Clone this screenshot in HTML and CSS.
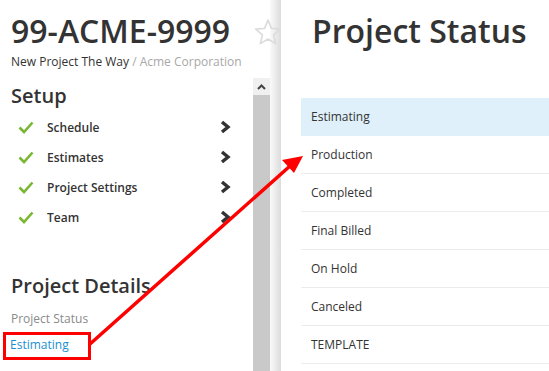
FILE: index.html
```html
<!DOCTYPE html>
<html>
<head>
<meta charset="utf-8">
<link rel="stylesheet" href="styles.css">
</head>
<body>
<div class="page">
  <div class="left">
    <div class="head">
      <h1 class="job">99-ACME-9999</h1>
      <div class="sub">New Project The Way <span class="client">/ Acme Corporation</span></div>
      <svg class="star" width="28" height="28" viewBox="0 0 26 26"><path d="M13 2 L16.2 9.6 L24.4 10.3 L18.2 15.7 L20.1 23.8 L13 19.5 L5.9 23.8 L7.8 15.7 L1.6 10.3 L9.8 9.6 Z" fill="none" stroke="#dcdcdc" stroke-width="1.6" stroke-linejoin="round"/></svg>
    </div>
    <div class="body">
      <div class="content">
        <h2 class="section">Setup</h2>
        <ul class="steps">
          <li class="step"><svg class="check" width="16" height="13" viewBox="0 0 16 13"><path d="M1.5 6.5 L6 11 L14.5 1.5" fill="none" stroke="#7ab733" stroke-width="2.6"/></svg><span class="label">Schedule</span><svg class="chev" width="12" height="14" viewBox="0 0 12 14"><path d="M3 2 L9 7 L3 12" fill="none" stroke="#333" stroke-width="3.4"/></svg></li>
          <li class="step"><svg class="check" width="16" height="13" viewBox="0 0 16 13"><path d="M1.5 6.5 L6 11 L14.5 1.5" fill="none" stroke="#7ab733" stroke-width="2.6"/></svg><span class="label">Estimates</span><svg class="chev" width="12" height="14" viewBox="0 0 12 14"><path d="M3 2 L9 7 L3 12" fill="none" stroke="#333" stroke-width="3.4"/></svg></li>
          <li class="step"><svg class="check" width="16" height="13" viewBox="0 0 16 13"><path d="M1.5 6.5 L6 11 L14.5 1.5" fill="none" stroke="#7ab733" stroke-width="2.6"/></svg><span class="label">Project Settings</span><svg class="chev" width="12" height="14" viewBox="0 0 12 14"><path d="M3 2 L9 7 L3 12" fill="none" stroke="#333" stroke-width="3.4"/></svg></li>
          <li class="step"><svg class="check" width="16" height="13" viewBox="0 0 16 13"><path d="M1.5 6.5 L6 11 L14.5 1.5" fill="none" stroke="#7ab733" stroke-width="2.6"/></svg><span class="label">Team</span><svg class="chev" width="12" height="14" viewBox="0 0 12 14"><path d="M3 2 L9 7 L3 12" fill="none" stroke="#333" stroke-width="3.4"/></svg></li>
        </ul>
        <h2 class="section details">Project Details</h2>
        <div class="field-label">Project Status</div>
        <div class="field-value"><span class="highlight">Estimating</span></div>
      </div>
      <div class="scrollbar">
        <div class="sb-up"><svg width="9" height="6" viewBox="0 0 9 6"><path d="M1 5 L4.5 1.5 L8 5" fill="none" stroke="#444" stroke-width="2"/></svg></div>
        <div class="sb-thumb"></div>
      </div>
    </div>
  </div>
  <div class="shade"></div>
  <div class="right">
    <h1 class="title">Project Status</h1>
    <ul class="statuses">
      <li class="status active">Estimating</li>
      <li class="status">Production</li>
      <li class="status">Completed</li>
      <li class="status">Final Billed</li>
      <li class="status">On Hold</li>
      <li class="status">Canceled</li>
      <li class="status">TEMPLATE</li>
    </ul>
  </div>
  <svg class="arrow" width="549" height="371" viewBox="0 0 549 371">
    <line x1="90" y1="344" x2="290" y2="166" stroke="#ff0000" stroke-width="3.5"/>
    <path d="M303 156 L282 160 L294 173 Z" fill="#ff0000"/>
  </svg>
</div>
</body>
</html>
```

FILE: styles.css
```css
* { box-sizing: border-box; }
html, body { margin: 0; padding: 0; }
body {
  font-family: "Open Sans", "Liberation Sans", sans-serif;
  color: #333;
  background: #fff;
}
.page {
  position: relative;
  width: 549px;
  height: 371px;
  overflow: hidden;
  display: flex;
}
.left {
  width: 270px;
  flex: none;
  display: flex;
  flex-direction: column;
}
.head {
  position: relative;
  height: 78px;
  padding: 9px 0 0 11px;
}
.job {
  margin: 0;
  font-size: 32px;
  font-weight: 600;
  line-height: 44px;
  color: #333;
}
.sub {
  font-size: 12px;
  line-height: 16px;
  margin-top: 1px;
  color: #333;
}
.client { color: #a8a8a8; }
.star {
  position: absolute;
  left: 254px;
  top: 18px;
}
.body {
  flex: 1;
  display: flex;
}
.content {
  width: 253px;
  padding: 5px 0 0 11px;
}
.section {
  margin: 0;
  font-size: 20px;
  font-weight: 600;
  line-height: 26px;
}
.steps {
  list-style: none;
  margin: 3px 0 0 0;
  padding: 0 0 0 7px;
}
.step {
  display: flex;
  align-items: center;
  height: 30px;
  font-size: 12px;
  font-weight: 600;
}
.check { flex: none; }
.label {
  margin-left: 13px;
  flex: 1;
}
.chev { margin-right: 22px; flex: none; }
.details { margin-top: 41px; }
.field-label {
  font-size: 12px;
  color: #8a8a8a;
  margin-top: 12px;
  line-height: 16px;
}
.field-value {
  margin-top: 5px;
  margin-left: -8px;
  font-size: 12px;
  line-height: 16px;
}
.highlight {
  display: inline-block;
  width: 88px;
  height: 28px;
  padding: 2px 0 0 4px;
  border: 3.5px solid #ff0000;
  color: #1b8fd2;
}
.scrollbar {
  width: 17px;
  display: flex;
  flex-direction: column;
}
.sb-up {
  height: 17px;
  background: #f0f0f0;
  display: flex;
  align-items: center;
  justify-content: center;
}
.sb-thumb {
  flex: 1;
  background: #c9c9c9;
}
.shade {
  width: 11px;
  flex: none;
  background: linear-gradient(to right, #fafafa, #dcdcdc);
}
.right {
  flex: 1;
  padding: 0 0 0 20px;
  min-width: 0;
}
.title {
  margin: 0;
  padding: 9px 0 0 11px;
  font-size: 32px;
  font-weight: 600;
  line-height: 44px;
  white-space: nowrap;
}
.statuses {
  list-style: none;
  margin: 45px 0 0 0;
  padding: 0;
}
.status {
  height: 38px;
  line-height: 37px;
  padding-left: 10px;
  font-size: 12px;
  border-bottom: 1px solid #ececec;
  white-space: nowrap;
}
.status.active {
  background: #dff0fa;
  border-bottom-color: #dff0fa;
}
.arrow {
  position: absolute;
  left: 0;
  top: 0;
  pointer-events: none;
}
```
